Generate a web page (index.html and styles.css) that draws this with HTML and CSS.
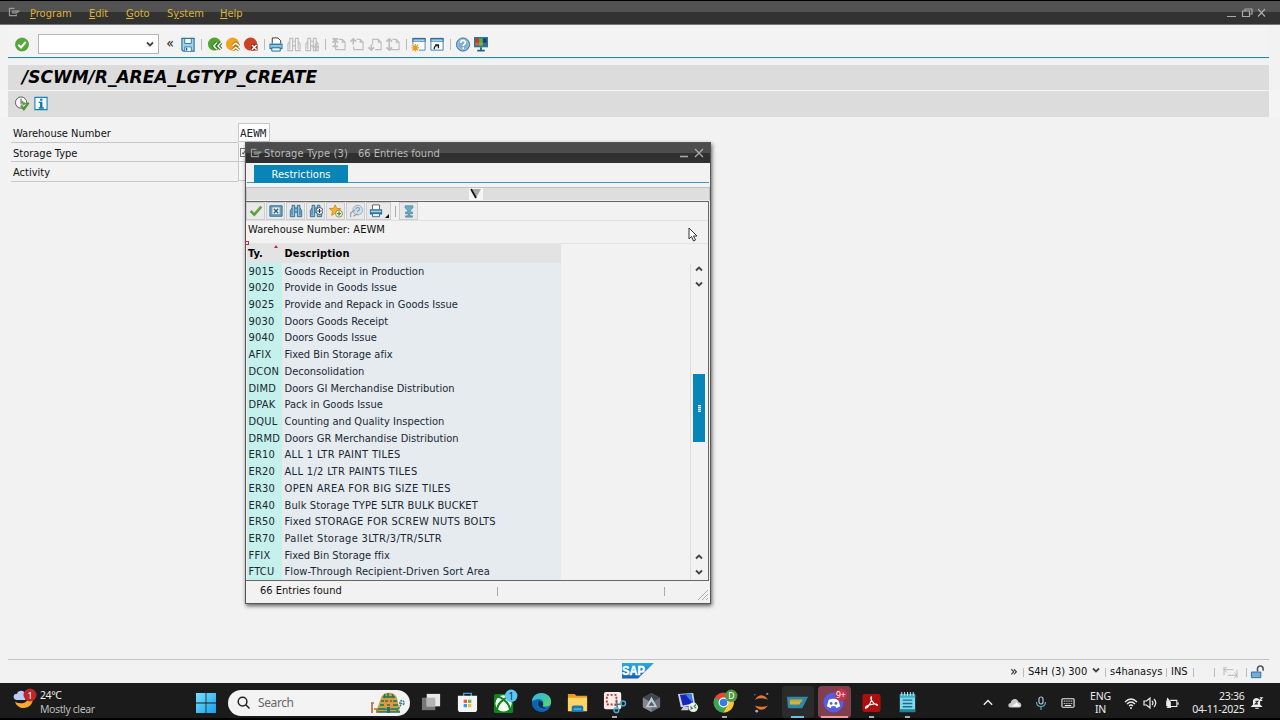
FILE: index.html
```
<!DOCTYPE html>
<html lang="en">
<head>
<meta charset="utf-8">
<title>/SCWM/R_AREA_LGTYP_CREATE</title>
<link rel="stylesheet" href="styles.css">
</head>
<body>
<svg class="sprite" aria-hidden="true">
  <symbol id="bino" viewBox="0 0 16 16"><path d="M3.500 1.500h3v3h3v-3h3v3l2 3v7h-5v-5h-3v5h-5v-7l2-3z"/><path d="M6.500 4.500v5M9.500 4.500v5M3.500 5v8M12.500 5v8"/></symbol>
  <symbol id="page" viewBox="0 0 16 16"><path d="M4.500 10v3.500h10v-8l-3-3h-4M11.500 2.500v3h3"/></symbol>
  <symbol id="menu" viewBox="0 0 14 12"><path d="M7 1.500H1.500v8H9V8M4 4.500h8.500M4 6.500h5l3-2"/></symbol>
  <symbol id="up" viewBox="0 0 8 6"><path d="M1 4.500l3-3 3 3"/></symbol>
  <symbol id="down" viewBox="0 0 8 6"><path d="M1 1.500l3 3 3-3"/></symbol>
</svg>
<div class="screen">
  <header class="menubar">
    <svg class="menu-icon" viewBox="0 0 14 12"><use href="#menu"/></svg>
    <nav class="menus">
      <span class="m-program"><u>P</u>rogram</span><span class="m-edit"><u>E</u>dit</span><span class="m-goto"><u>G</u>oto</span><span class="m-system">S<u>y</u>stem</span><span class="m-help"><u>H</u>elp</span>
    </nav>
    <svg class="win-ctl" viewBox="0 0 42 12"><path d="M1 9.500h9M16.500 4h7v5.500h-7zM19 4V2h7v5h-2.500M32 2l7 7.500M39 2l-7 7.500"/></svg>
  </header>

  <div class="toolbar">
    <svg class="ic" viewBox="0 0 16 16"><circle cx="8" cy="8" r="7" fill="#55a838" stroke="#3d8b28" stroke-width=".6"/><path d="M4 8.200l3 3 5-6" fill="none" stroke="#fff" stroke-width="2.200"/></svg>
    <div class="command"><svg class="arrow" viewBox="0 0 8 6"><use href="#down"/></svg></div>
    <span class="collapse">«</span>
    <svg class="ic" viewBox="0 0 16 16"><path d="M1.500 1.500h13V15H3l-1.500-1.500z" fill="#a9d3ec" stroke="#2a77a8" stroke-width="1.300"/><path d="M4.500 2v5h7V2M4.500 15v-4.500h7V15" fill="#f6fafc" stroke="#2a77a8"/><path d="M6.500 11.500v3" stroke="#14679b" stroke-width="1.500"/></svg>
    <i class="sep"></i>
    <svg class="ic" viewBox="0 0 16 16"><circle cx="7.500" cy="7.500" r="7" fill="#50a52f"/><path d="M10 6l-3.300 3.500 3.300 3.500M14.500 6l-3.300 3.500 3.300 3.500" class="halo green"/><path d="M10 6l-3.300 3.500 3.300 3.500M14.500 6l-3.300 3.500 3.300 3.500" class="white"/></svg>
    <svg class="ic" viewBox="0 0 16 16"><circle cx="7.500" cy="7.500" r="7" fill="#f0a51d"/><path d="M7.500 9.500l3.500-3 3.500 3M7.500 14l3.500-3 3.500 3" class="halo orange"/><path d="M7.500 9.500l3.500-3 3.500 3M7.500 14l3.500-3 3.500 3" class="white"/></svg>
    <svg class="ic" viewBox="0 0 16 16"><circle cx="7.500" cy="7.500" r="7" fill="#ca4324"/><path d="M8 7.500h7v7H8z" fill="#8d2c1d"/><path d="M9 8.500l5 5M14 8.500l-5 5" class="white"/></svg>
    <i class="sep s7"></i>
    <svg class="ic" viewBox="0 0 16 16"><path d="M4 7V1h6l3 3v3" fill="#fff" stroke="#333"/><path d="M1 7h14v6H1z" fill="#2f80ad"/><path d="M2 8.500h12v3H2z" fill="#8fc4e0"/><path d="M3.500 11.500h9V15h-9z" fill="#e8f5fb" stroke="#1b668f"/></svg>
    <svg class="ic muted" viewBox="0 0 16 16"><use href="#bino"/></svg>
    <svg class="ic muted" viewBox="0 0 16 16"><use href="#bino"/><path d="M12 7v7M8.500 10.500h7" stroke-width="2"/></svg>
    <i class="sep"></i>
    <svg class="ic muted" viewBox="0 0 16 16"><use href="#page"/><path d="M1 6l3-3 3 3M4 3v7M1 10h6M1 2h6" stroke-width="1.700"/></svg>
    <svg class="ic muted" viewBox="0 0 16 16"><use href="#page"/><path d="M1 5l3-3 3 3M4 2v6" stroke-width="1.700"/></svg>
    <svg class="ic muted" viewBox="0 0 16 16"><path d="M5.500 8V2.500h6l3 3v8H8M11.500 2.500v3h3"/><path d="M1 11l3 3 3-3M4 8v6" stroke-width="1.700"/></svg>
    <svg class="ic muted" viewBox="0 0 16 16"><use href="#page"/><path d="M1 11l3 3 3-3M4 3v10M1 5l3-3 3 3" stroke-width="1.700"/></svg>
    <i class="sep s8"></i>
    <svg class="ic" viewBox="0 0 16 16"><path d="M1.500 1.500h13v12.500h-13z" fill="#fcfdfe" stroke="#4b87b2"/><path d="M1 1h14v4H1z" fill="#306d9b"/><path d="M2 2.500h12v2H2z" fill="#a9cbe1"/><path d="M0 8h8v8H0z" fill="#f4f4f4"/><path d="M4 7.500v8M0 11.500h8M1 8.500l6 6M7 8.500l-6 6" stroke="#e59b16" stroke-width="1.300"/></svg>
    <svg class="ic" viewBox="0 0 16 16"><path d="M1.500 1.500h13v12.500h-13z" fill="#fcfdfe" stroke="#397cab"/><path d="M1 1h14v4H1z" fill="#306d9b"/><path d="M2 2.500h12v2H2z" fill="#a9cbe1"/><path d="M5 13c0-3 1-4 4-4M6 8.500h3.500V12" fill="none" stroke="#222" stroke-width="1.400"/></svg>
    <i class="sep s8"></i>
    <svg class="ic" viewBox="0 0 16 16"><circle cx="8" cy="8" r="7" fill="#80acd0" stroke="#396f9d"/><circle cx="8" cy="8" r="5.500" fill="none" stroke="#b9d2e6" stroke-width=".7"/><path d="M5.500 6.500C5.500 3 10.500 3 10.500 6c0 1.800-2.300 1.800-2.300 3.700M8.200 11v1.800" fill="none" stroke="#fff" stroke-width="1.700"/></svg>
    <svg class="ic" viewBox="0 0 16 16"><path d="M.5 0h15v11H.5z" fill="#277a9e"/><path d="M2 1.500h4V9H2z" fill="#d73521"/><path d="M6 1.500h4V9H6z" fill="#4db23c"/><path d="M10 1.500h4V9h-4z" fill="#193b91"/><path d="M2 6h12v3H2z" fill="#eed44d" opacity=".28"/><path d="M8 11v3M4 14.500h8" stroke="#246584" stroke-width="2"/></svg>
  </div>

  <h1 class="title">/SCWM/R_AREA_LGTYP_CREATE</h1>
  <div class="appbar">
    <svg class="ic" viewBox="0 0 16 16"><circle cx="7" cy="7" r="6" fill="#fafafa" stroke="#555"/><path d="M7 3v6" fill="none" stroke="#444"/><path d="M7 10l3 4 5-7" fill="none" stroke="#52933b" stroke-width="2.500"/><path d="M7 4.500l6 3.500-4 2.500z" fill="#62a24b"/></svg>
    <svg class="ic" viewBox="0 0 16 16"><path d="M1.500 1.500h13v13h-13z" fill="#f4fbfe" stroke="#1685b5" stroke-width="1.200"/><path d="M7 3h2.500v2H7zM5.500 6h4v6H11v1.500H5.500V12H7V7.500H5.500z" fill="#087caf"/></svg>
  </div>

  <main class="form">
    <div class="field"><label>Warehouse Number</label><span class="value filled">AEWM</span></div>
    <div class="field"><label>Storage Type</label><span class="value"><i class="check">✓</i></span></div>
    <div class="field"><label>Activity</label><span class="value"></span></div>
  </main>

  <footer class="statusbar">
    <svg class="sap" viewBox="0 0 32 16"><defs><linearGradient id="sg" x2="0" y2="1"><stop stop-color="#24aee2"/><stop offset="1" stop-color="#1560ae"/></linearGradient></defs><path d="M0 0h32L16 15.500H0z" fill="url(#sg)"/><text x="0" y="12" textLength="23" lengthAdjust="spacingAndGlyphs">SAP</text></svg>
    <div class="status-items">
      <span class="more">»</span><i></i><span class="sys">S4H (3) 300</span><svg class="arrow" viewBox="0 0 8 6"><use href="#down"/></svg><i></i><span class="host">s4hanasys</span><i></i><span class="ins">INS</span><i class="after"></i><i class="far"></i>
      <svg class="swap" viewBox="0 0 16 14"><path d="M1 1v9M1 4h10M4 1L1 4l3 3M15 4v9M15 10H5M12 7l3 3-3 3"/></svg><i class="before-lock"></i>
      <svg class="lock" viewBox="0 0 16 16"><path d="M8 7V4c0-4 6-4 6 0v2" fill="none" stroke="#555" stroke-width="1.700"/><path d="M1.500 7.500h10v6h-10z" fill="#76add3" stroke="#276b9d"/></svg>
    </div>
  </footer>

  <div class="taskbar">
    <div class="weather">
      <svg viewBox="0 0 24 26"><path d="M20 10c1 12-14 15-18 5 7 3 13 1 14-6z" fill="#f6a92e"/><path d="M3 13c-5-3-1-7 1-6 1-5 9-4 8 1 3 2 1 5-1 5z" fill="#bccdf5"/><circle cx="17" cy="8" r="6.500" fill="#bf272b"/><text x="14.500" y="11.500">1</text></svg>
      <p><b>24°C</b><span>Mostly clear</span></p>
    </div>
    <svg class="start" viewBox="0 0 20 20"><defs><linearGradient id="wg" x2="1" y2="1"><stop stop-color="#74e2fb"/><stop offset="1" stop-color="#1a9df0"/></linearGradient></defs><path d="M0 0h9.600v9.600H0zM10.400 0H20v9.600h-9.600zM0 10.400h9.600V20H0zM10.400 10.400H20V20h-9.600z" fill="url(#wg)"/></svg>
    <div class="search">
      <svg class="lens" viewBox="0 0 14 14"><circle cx="6" cy="6" r="4.700"/><path d="M9.500 9.500l4 4"/></svg><span>Search</span>
      <svg class="pharaoh" viewBox="0 0 36 22"><path d="M6 20l5-14c2-7 14-7 16 0l3 14z" fill="#c9a33b"/><path d="M8 17h20M10 13h18M11 9h16M13 5h12M18 1v4M15 2l-1 4M22 2l2 4M8 20h22" stroke="#1e7167" stroke-width="1.500"/><path d="M14 7h9v7c-1 4-8 4-9 0z" fill="#d89c48"/><path d="M15 9h3M20 9h2M17 13h3" stroke="#453727"/><path d="M17 15h3v6h-3z" fill="#206d77"/><path d="M2 21V11M1 11h3M4 17h3v4" fill="none" stroke="#ad7542" stroke-width="1.700"/><path d="M27 19l5-8M30 12c-1-6 7-3 3 1" fill="none" stroke="#347c91" stroke-width="1.500" stroke-dasharray="2 .7"/></svg>
    </div>
    <div class="apps">
      <span><svg viewBox="0 0 24 24"><path d="M2 7h14v13H2z" fill="#777"/><path d="M7 3h14v13H7z" fill="#e8e8e8"/><path d="M7 7h9v9H7z" fill="#b5b5b5"/></svg></span>
      <span><svg viewBox="0 0 24 24"><path d="M8 7V2.500h8V7" fill="none" stroke="#39a3d5" stroke-width="1.500"/><path d="M2 5h20v14q0 3-3 3H5q-3 0-3-3z" fill="#f3f5f7"/><path d="M8 9h3.500v3.500H8z" fill="#ed5a35"/><path d="M12.500 9H16v3.500h-3.500z" fill="#7cb642"/><path d="M8 13.500h3.500V17H8z" fill="#2ca5df"/><path d="M12.500 13.500H16V17h-3.500z" fill="#f6bc31"/></svg></span>
      <span><svg viewBox="0 0 24 24"><rect x="1" y="3" width="20" height="20" rx="2" fill="#10841d"/><circle cx="11" cy="13" r="8.500" fill="#f6fff5"/><path d="M4 20c1-6 4-9 7-11 3 2 6 5 7 11M5 6c3 0 5 2 6 3 1-1 3-3 6-3" fill="none" stroke="#10841d" stroke-width="2.200"/><circle cx="19" cy="5" r="6.500" fill="#5bc7f2"/><text x="16" y="9" class="dark">1</text></svg></span>
      <span><svg viewBox="0 0 24 24"><defs><linearGradient id="eg" x2="1" y2="1"><stop stop-color="#29b7ed"/><stop offset=".55" stop-color="#45c5a1"/><stop offset="1" stop-color="#5adb67"/></linearGradient></defs><circle cx="12" cy="12" r="10" fill="#156dbb"/><path d="M2 11C3-2 23 0 22 12c0 5-8 5-9 3 4-7-6-9-11-4z" fill="url(#eg)"/><path d="M9 10c-5 5 1 13 10 9-7 6-17 1-17-7 2-2 5-3 7-2z" fill="#0b62b0"/><path d="M10 10c-4 4 0 10 8 8-5 0-6-3-4-4-1-2-2-3-4-4z" fill="#122d50"/></svg></span>
      <span><svg viewBox="0 0 24 24"><path d="M2 3h7l2 2h11v16H2z" fill="#e79c1e"/><path d="M2 7h20v14H2z" fill="#ffd466"/><path d="M6 17q0-2 2-2h8q2 0 2 2v5H6z" fill="#1978b6"/><path d="M8 18h8v2H8z" fill="#54a9d8"/></svg></span>
      <span class="open"><svg viewBox="0 0 24 24"><rect x="1" y="1" width="18" height="18" rx="2" fill="#f5eeec"/><path d="M4 4h10v10H4z" fill="none" stroke="#bb372e" stroke-width="2" stroke-dasharray="2 2"/><path d="M14 9l1 9M12 15l8-2" stroke="#5a6771" stroke-width="1.500"/><circle cx="14" cy="20" r="2.500" class="blue-ring"/><circle cx="21" cy="13" r="2.500" class="blue-ring"/></svg></span>
      <span><svg viewBox="0 0 24 24"><path d="M12 2l9 5v10l-9 5-9-5V7z" fill="#666c74"/><path d="M12 2l9 5-9 5-9-5z" fill="#424850"/><path d="M3 7l9 5v10l-9-5z" fill="#858a90"/><path d="M12 6l-6 11h12z" fill="#c4cbd0"/><path d="M12 11l-3 4.500h6z" fill="#535960"/></svg></span>
      <span><svg viewBox="0 0 24 24"><path d="M2 3l16-1 2 13-15 2z" fill="#cdd5e5"/><path d="M4 4l12-1 2 10-11 2z" fill="#1526bd"/><path d="M10 4l7 8-1-9z" fill="#3985e3"/><path d="M8 16l5 1v3H5z" fill="#ccd"/><circle cx="18" cy="17" r="5" fill="#edf0ed"/><path d="M15 16l2 2-2 1M21 14l-2 2 2 2" fill="none" stroke="#358b38" stroke-width="1.300"/></svg></span>
      <span class="open"><svg viewBox="0 0 24 24"><circle cx="11" cy="12" r="10.500" fill="#ea4335"/><path d="M11 12L2 7A10.500 10.500 0 0011 22.500l5-7z" fill="#34a853"/><path d="M11 7h9.500A10.500 10.500 0 0111 22.500l5-9z" fill="#fbc62e"/><circle cx="11" cy="12" r="5.200" fill="#fff"/><circle cx="11" cy="12" r="4" fill="#347de9"/><circle cx="19" cy="5" r="6.500" fill="#529840"/><text x="15.800" y="8.300">D</text></svg></span>
      <span><svg viewBox="0 0 24 24"><path d="M5 9Q12 0 19 9Q12 6 5 9zM5 15Q12 18 19 15Q12 24 5 15z" fill="#eb772e"/><circle cx="18" cy="3" r="1.200" fill="#888"/><circle cx="7" cy="21" r="1.500" fill="#aaa"/><circle cx="5" cy="4" r=".8" fill="#777"/></svg></span>
      <span class="active"><svg viewBox="0 0 24 24"><path d="M1 6h22l-6 12H2z" fill="#2f86a5"/><path d="M4 9h13l-3 5H4z" fill="#d6b536"/><path d="M4 9h13v2H4z" fill="#b3ab4a"/></svg></span>
      <span class="active alert"><svg viewBox="0 0 24 24"><circle cx="11" cy="12" r="10.500" fill="#555de5"/><path d="M6 9q5-2 10 0l2 7-4 2-1-2H9l-1 2-4-2z" fill="#fff"/><circle cx="8.500" cy="13" r="1.400" fill="#555de5"/><circle cx="13.500" cy="13" r="1.400" fill="#555de5"/><circle cx="19" cy="4" r="6.500" fill="#c6334a"/><text x="13.500" y="7.500" class="nine">9+</text></svg></span>
      <span class="open"><svg viewBox="0 0 24 24"><rect x="2.500" y="3" width="19" height="19" rx="2.500" fill="#ac100e"/><path d="M12 6c-2 0 0 7 6 9 1-1-3-2-6-1-5 1-7 3-6 4 2 0 7-7 6-12z" fill="none" stroke="#fff" stroke-width="1.200"/></svg></span>
      <span class="open"><svg viewBox="0 0 24 24"><path d="M4 4h16v18H4z" fill="#7bd9ed"/><path d="M4 19h16v3H4z" fill="#20839b"/><path d="M4 3h16v4H4z" fill="#3aafc9"/><path d="M6 1v4M9 1v4M12 1v4M15 1v4M18 1v4" stroke="#d1e9ef"/><path d="M7 9.500h10M7 13h10M7 16.500h10" stroke="#206b84" stroke-width="1.500"/></svg></span>
    </div>
    <div class="tray">
      <span class="t-up"><svg viewBox="0 0 12 12"><path d="M1 8l5-5 5 5" stroke-width="1.700"/></svg></span>
      <span class="t-cloud"><svg viewBox="0 0 16 12"><path d="M3 11c-4 0-3-5 0-5C4 0 11 0 12 5c4 0 4 6 1 6z" fill="#c9c9c9" stroke="none"/><path d="M4 10l6-5 4 5z" fill="#f6f6f6" stroke="none"/></svg></span>
      <span class="t-mic"><svg viewBox="0 0 12 14"><rect x="4" y="1" width="4" height="7" rx="2" stroke="#b0cbd1"/><path d="M1.500 6c0 6 9 6 9 0M6 11v3" stroke="#58afc0"/></svg></span>
      <span class="t-key"><svg viewBox="0 0 15 12"><rect x="1" y="1.500" width="13" height="9" rx="1"/><path d="M3 4h9M3 6.500h9" stroke-dasharray="1 1"/><path d="M4 8.700h7"/></svg></span>
      <span class="lang">ENG<br>IN</span>
      <span class="t-wifi"><svg viewBox="0 0 14 14"><path d="M1 6q6-6 12 0M3 8q4-4 8 0M5 10q2-2 4 0"/><circle cx="7" cy="12" r="1" fill="#eee" stroke="none"/></svg></span>
      <span class="t-sound"><svg viewBox="0 0 14 14"><path d="M1 5h2.500L7 2v10L3.500 9H1zM9 5q2 2 0 4M11 3q3.500 4 0 8"/></svg></span>
      <span class="t-bat"><svg viewBox="0 0 16 14"><path d="M6 4h7.500v7H3M15 6v3"/><path d="M3 2l3 4v4H2V6z" fill="#eee"/><path d="M2 12h5"/></svg></span>
      <span class="clock">23:36<br>04-11-2025</span>
      <span class="t-bell"><svg viewBox="0 0 16 16"><path d="M2 12l2-2V5q3-4 7 0v5l2 2zM6 14h4" fill="#eee"/><path d="M11 2h3l-3 3h3" /><path d="M6 6h3L6 9h3" stroke="#222"/></svg></span>
    </div>
  </div>

  <section class="dialog">
    <div class="dlg-title"><svg class="menu-icon" viewBox="0 0 14 12"><use href="#menu"/></svg><span class="dt-name">Storage Type (3)</span><span class="dt-count">66 Entries found</span>
      <svg class="dlg-ctl" viewBox="0 0 26 12"><path d="M1 9.500h8M16 2l8 8M24 2l-8 8"/></svg></div>
    <div class="tabs"><span>Restrictions</span></div>
    <div class="splitter"><svg viewBox="0 0 14 12"><path d="M0 0h14v12H0z" fill="#f6f6f6"/><path d="M2 1h10L7 10z" fill="#aaa"/><path d="M2 1l5 9" stroke="#111" stroke-width="1.700"/></svg></div>
    <div class="dlg-body">
      <div class="dlg-tools">
        <span><svg viewBox="0 0 16 16"><path d="M2 8l4 4 8-9" fill="none" stroke="#5a9a3a" stroke-width="3"/><path d="M3 8l3 2.500 7-7" fill="none" stroke="#8bc452"/></svg></span>
        <span><svg viewBox="0 0 16 16"><path d="M1 2h14v12H1z" fill="#6aa1c3" stroke="#286b91"/><path d="M4 4h8v7.500H4z" fill="#f1f9fd"/><path d="M5.500 5.500l5 5M10.500 5.500l-5 5" stroke="#37536a" stroke-width="1.500"/></svg></span>
        <span class="binoc"><svg viewBox="0 0 16 16"><use href="#bino"/></svg></span>
        <span class="binoc"><svg viewBox="0 0 16 16"><use href="#bino"/><circle cx="12" cy="8" r="4" fill="#eef6fb" stroke="#37536a"/><path d="M12 5.500v5M9.500 8h5" stroke="#222"/></svg></span>
        <span><svg viewBox="0 0 16 16"><path d="M7 1l1.800 4 4.700.3-3.500 3 1 4.700L7 10.500 3 13l1-4.700L.5 5.300 5.200 5z" fill="#f7b52d" stroke="#d38914"/><circle cx="11.500" cy="11" r="4" fill="#f8faf2" stroke="#778651"/><path d="M11.500 8.500v5M9 11h5" stroke="#638436" stroke-width="1.500"/></svg></span>
        <span><svg viewBox="0 0 16 16"><circle cx="10" cy="7" r="5.500" fill="#d2e1ec" stroke="#91a8b8"/><path d="M8 6q0-2 2-2t2 2q0 1-2 2v1.500M2 15v-5l5-3M5 14l5-3" fill="none" stroke="#8297a6" stroke-width="1.200"/></svg></span>
        <span class="print"><svg viewBox="0 0 16 16"><path d="M4 6V1h8v5" fill="#fff" stroke="#555"/><path d="M1 6h14v6H1z" fill="#256f99"/><path d="M2 7.500h12v2H2z" fill="#a5cfe4"/><path d="M4 11h8v3.500H4z" fill="#eef9fc" stroke="#216a8f"/></svg><b></b></span>
        <i></i>
        <span><svg viewBox="0 0 16 16"><path d="M3.500 2h9v2.500L9.500 7v2H12v2H9v2.500h3V15H4v-1.500h3V11H4V9h2.500V7l-3-2.500z" fill="#6babc9" stroke="#34718e" stroke-width=".6"/></svg></span>
      </div>
      <p class="caption"><span>Warehouse Number: AEWM</span></p>
      <div class="result">
        <div class="grid">
          <div class="head"><span>Ty.<i></i></span><span><b>Description</b></span></div>
          <div class="row"><span>9015</span><span><b>Goods Receipt in Production</b></span></div>
          <div class="row"><span>9020</span><span><b>Provide in Goods Issue</b></span></div>
          <div class="row"><span>9025</span><span><b>Provide and Repack in Goods Issue</b></span></div>
          <div class="row"><span>9030</span><span><b>Doors Goods Receipt</b></span></div>
          <div class="row"><span>9040</span><span><b>Doors Goods Issue</b></span></div>
          <div class="row"><span>AFIX</span><span><b>Fixed Bin Storage afix</b></span></div>
          <div class="row"><span>DCON</span><span><b>Deconsolidation</b></span></div>
          <div class="row"><span>DIMD</span><span><b>Doors GI Merchandise Distribution</b></span></div>
          <div class="row"><span>DPAK</span><span><b>Pack in Goods Issue</b></span></div>
          <div class="row"><span>DQUL</span><span><b>Counting and Quality Inspection</b></span></div>
          <div class="row"><span>DRMD</span><span><b>Doors GR Merchandise Distribution</b></span></div>
          <div class="row caps"><span>ER10</span><span><b>ALL 1 LTR PAINT TILES</b></span></div>
          <div class="row caps"><span>ER20</span><span><b>ALL 1/2 LTR PAINTS TILES</b></span></div>
          <div class="row caps"><span>ER30</span><span><b>OPEN AREA FOR BIG SIZE TILES</b></span></div>
          <div class="row mixed"><span>ER40</span><span><b>Bulk Storage TYPE 5LTR BULK BUCKET</b></span></div>
          <div class="row semi"><span>ER50</span><span><b>Fixed STORAGE FOR SCREW NUTS BOLTS</b></span></div>
          <div class="row caps"><span>ER70</span><span><b>Pallet Storage 3LTR/3/TR/5LTR</b></span></div>
          <div class="row"><span>FFIX</span><span><b>Fixed Bin Storage ffix</b></span></div>
          <div class="row mixed"><span>FTCU</span><span><b>Flow-Through Recipient-Driven Sort Area</b></span></div>
        </div>
        <div class="scroll">
          <svg class="arrow" viewBox="0 0 8 6"><use href="#up"/></svg><svg class="arrow" viewBox="0 0 8 6"><use href="#down"/></svg>
          <div class="thumb"><i></i></div>
          <svg class="arrow low" viewBox="0 0 8 6"><use href="#up"/></svg><svg class="arrow" viewBox="0 0 8 6"><use href="#down"/></svg>
        </div>
      </div>
    </div>
    <div class="dlg-status"><span>66 Entries found</span><i class="d1"></i><i class="d2"></i><svg viewBox="0 0 12 12"><path d="M1 11L11 1M5 11l6-6M9 11l2-2"/></svg></div>
    <i class="focus"></i>
  </section>
  <svg class="cursor" viewBox="0 0 10 15"><path d="M1 1v11l2.500-2.500L5.500 14l2-1-2-4H9z" fill="#fff" stroke="#333"/></svg>
</div>
</body>
</html>
```
FILE: styles.css
```
* { box-sizing: border-box; }
body { margin: 0; background: #000; }
svg { display: block; flex: none; }
.sprite { position: absolute; width: 0; height: 0; }
.screen {
  position: relative; width: 1280px; height: 720px; padding: 1px 0 2px; overflow: hidden;
  display: flex; flex-direction: column; background: #000;
  font: 11px/16px "DejaVu Sans Condensed", "Noto Sans", sans-serif; color: #111;
}
.menubar {
  height: 24px; flex: none; display: flex; align-items: center; padding: 0 12px 0 8px;
  background: linear-gradient(#525252 0 11px, #323232 11px 23px, #777 23px);
}
.menu-icon { width: 13px; height: 11px; fill: none; stroke: #999; stroke-width: 1.300; }
.menubar .menu-icon { margin-top: -2px; }
.menus { display: flex; flex: 1; margin-left: 9px; color: #dfb238; line-height: 22px; padding-top: 2px; }
.menus span { white-space: nowrap; }
.m-program { width: 59px; }
.m-edit { width: 37px; }
.m-goto { width: 41px; }
.m-system { width: 53px; }
.win-ctl { width: 42px; height: 12px; fill: none; stroke: #aaa; stroke-width: 1.200; }

.toolbar { height: 40px; flex: none; display: flex; align-items: center; padding: 0 0 2px 13px; background: linear-gradient(#f3f3f3 0 32px, #28899e 32px 33px, #d8f0f4 33px 34px, #f2f2f2 34px) 8px 0 / 1261px 40px no-repeat #f2f2f2; }
.ic { width: 18px; height: 15px; }
.muted { fill: none; stroke: #bdbdbd; stroke-width: 1.200; }
.white { fill: none; stroke: #fff; stroke-width: 1.500; }
.halo { fill: none; stroke-width: 3.500; }
.green { stroke: #34761f; }
.orange { stroke: #ad711c; }
.command { width: 121px; height: 20px; margin: 0 0 0 7px; border: 1px solid #b5b5b5; background: #fff; display: flex; justify-content: flex-end; align-items: center; padding-right: 4px; }
.arrow { width: 8px; height: 6px; fill: none; stroke: #444; stroke-width: 1.800; }
.collapse { width: 20px; text-align: center; font-size: 14px; line-height: 14px; padding-left: 2px; margin-bottom: 2px; }
.sep { width: 9px; height: 11px; background: linear-gradient(#bbb, #bbb) 4px 0 / 1px 11px no-repeat; }
.s7 { width: 7px; }
.s8 { width: 8px; }

.title { height: 25px; flex: none; margin: 0; border-left: 8px solid #f2f2f2; border-right: 11px solid #f2f2f2; padding-left: 14px; background: #dcdcdc; color: #000; font: italic bold 17px/25px "DejaVu Sans", sans-serif; white-space: nowrap; }
.appbar { height: 27px; flex: none; border: solid #f4f4f4; border-width: 1px 11px 0 8px; background: #dcdcdc; display: flex; align-items: center; gap: 1px; padding: 0 0 2px 5px; }
.form { flex: 1; background: #f2f2f2; padding: 6px 0 0 11px; }
.field { display: flex; height: 19.600px; width: 227px; border-bottom: 1px solid #c7c7c7; }
.field label { width: 227px; padding-left: 2px; line-height: 22px; flex: none; }
.value { width: 32px; flex: none; border: 1px solid #c8c8c8; border-top: 0; background: #f8f8f8; height: 19px; }
.filled { border-top: 1px solid #c8c8c8; background: #fff; font: 11px/19px "DejaVu Sans Mono", monospace; padding-left: 1px; color: #223; }
.check { display: block; width: 9px; height: 9px; margin: 5px 0 0 1px; border: 1px solid #777; font: 8px/8px "DejaVu Sans", sans-serif; }

.statusbar { height: 24px; flex: none; display: flex; background: #f2f2f2; background-image: linear-gradient(#c4c4c4, #c4c4c4); background-size: 1261px 1px; background-position: 8px 0; background-repeat: no-repeat; }
.sap { width: 32px; height: 16px; margin: 4px 0 0 622px; }
.sap text { font: bold 12px "Liberation Sans", sans-serif; fill: #fff; stroke: #fff; stroke-width: .5; }
.status-items { display: flex; align-items: center; margin-left: 356px; padding-top: 2px; white-space: nowrap; }
.status-items i { width: 1px; height: 9px; background: #bbb; }
.more { width: 13px; font-size: 14px; line-height: 14px; margin-bottom: 3px; }
.sys { width: 65px; padding-left: 4px; }
.status-items .arrow { margin: 0 5px 4px 3px; }
.host { width: 60px; padding-left: 4px; letter-spacing: 0; }
.ins { width: 26px; padding-left: 4px; }
.status-items .far { margin-left: 20px; }
.swap { width: 15px; height: 13px; margin-left: 8px; fill: none; stroke: #b5b5b5; }
.status-items .before-lock { margin-left: 8px; }
.lock { width: 15px; height: 15px; margin-left: 3px; }

.taskbar { height: 35px; flex: none; display: flex; align-items: center; background: #1b1b1b; color: #eee; font: 11px/13px "Noto Sans", sans-serif; }
.weather { width: 196px; display: flex; padding-left: 13px; align-items: center; }
.weather svg { width: 24px; height: 26px; margin-bottom: 2px; }
.weather p { margin: 3px 0 0 3px; display: flex; flex-direction: column; gap: 1px; font-size: 10.500px; letter-spacing: -.4px; }
.weather b { font-weight: normal; }
.weather span { color: #bbb; }
.weather text, .apps text { font: 9px "Noto Sans", sans-serif; fill: #fff; }
.start { width: 20px; height: 20px; margin-top: 4px; }
.search { width: 182px; height: 26px; margin: 4px 0 0 12px; border-radius: 13px; background: #f3f3f3; display: flex; align-items: center; padding-left: 9px; color: #666; font-size: 12px; letter-spacing: -.4px; }
.lens { width: 13px; height: 13px; fill: none; stroke: #222; stroke-width: 1.600; }
.search span { margin-left: 8px; width: 112px; }
.pharaoh { width: 36px; height: 22px; }
.apps { display: flex; margin-left: 2.700px; height: 35px; width: 513.800px; }
.apps span { width: 36.700px; flex: none; display: flex; align-items: center; justify-content: center; padding-top: 4px; }
.apps svg { width: 23px; height: 23px; overflow: visible; }
.apps .dark { fill: #14384d; font-size: 11px; }
.apps .nine { font-size: 9px; }
.blue-ring { fill: none; stroke: #4cacd9; stroke-width: 1.500; }
.apps .open { background: linear-gradient(#aaa, #aaa) center 33px / 5px 2px no-repeat; }
.apps .active { width: 32.700px; margin: 3px 2px 0; padding-top: 1px; border-radius: 4px; background: linear-gradient(#62c4e6, #62c4e6) center 30px / 13px 2px no-repeat, #2b2b2b; }
.apps .alert { background: linear-gradient(#ef9aac, #ef9aac) center 30px / 27px 2px no-repeat, #813e4c; }
.tray { display: flex; align-items: center; margin-left: 49px; padding-top: 4px; }
.tray span { display: flex; justify-content: center; text-align: center; flex: none; }
.tray svg { width: 14px; height: 14px; fill: none; stroke: #eee; stroke-width: 1.200; }
.t-up { width: 25px; }
.t-up svg { width: 10px; }
.t-cloud { width: 29px; }
.t-mic { width: 24px; }
.t-key { width: 29px; }
.tray .lang { display: block; width: 36px; font-size: 10.500px; letter-spacing: -.2px; }
.t-wifi { width: 26px; }
.t-sound { width: 12px; }
.t-bat { width: 27px; padding-left: 4px; }
.tray .clock { display: block; width: 61px; text-align: right; font-size: 10.500px; letter-spacing: -.25px; white-space: nowrap; }
.t-bell { width: 26px; }

.dialog { position: absolute; left: 245px; top: 142px; width: 466px; height: 462px; background: #f2f2f2; border: 1px solid #555; box-shadow: 1px 2px 4px rgba(0, 0, 0, .6); display: flex; flex-direction: column; }
.dlg-title { height: 20px; flex: none; display: flex; align-items: center; padding: 0 5px 0 4px; background: linear-gradient(#4d4d4d 0 10px, #303030 10px); color: #bbb; white-space: nowrap; }
.dt-name { width: 94px; margin-left: 1px; letter-spacing: .15px; }
.dt-name, .dt-count { padding-top: 1px; }
.dt-count { flex: 1; }
.dlg-ctl { width: 26px; height: 12px; fill: none; stroke: #aaa; stroke-width: 1.300; }
.tabs { height: 24px; flex: none; padding: 2px 1px 0 8px; background: linear-gradient(#3a9bb0, #3a9bb0) 1px 19px / 462px 1px no-repeat; }
.tabs span { display: block; width: 94px; height: 18px; text-align: center; background: #0884b7; color: #fff; line-height: 19px; letter-spacing: .1px; }
.splitter { height: 14px; flex: none; border: 1px solid #c2c2c2; background: #dedede; border-bottom-color: #eee; padding-left: 222px; }
.splitter svg { width: 14px; height: 12px; }
.dlg-body { height: 380px; flex: none; margin-right: 1px; border: solid #666; border-width: 1px 1px 1px 0; padding-left: 1px; }
.dlg-tools { height: 19px; display: flex; gap: 1px; border-bottom: 1px solid #e0e0e0; margin-left: -1px; }
.dlg-tools span { width: 19px; height: 18px; border: 1px solid #ccc; background: #e9e9e9; display: flex; align-items: center; justify-content: center; }
.dlg-tools svg { width: 14px; height: 14px; }
.binoc svg { fill: #94c3df; stroke: #286486; }
.dlg-tools .print { width: 25px; }
.dlg-tools .print b { border-left: 4px solid transparent; border-bottom: 4px solid #111; align-self: flex-end; margin: 0 0 1px 2px; }
.dlg-tools i { width: 6px; background: linear-gradient(#aaa, #aaa) 3px 4px / 1px 11px no-repeat; }
.caption { margin: 0; height: 23px; padding-left: 1px; line-height: 17px; border-bottom: 1px solid #e4e4e4; letter-spacing: .07px; }
.result { display: flex; height: 336px; }
.grid { width: 314px; flex: none; }
.head, .row { display: flex; }
.head { height: 18.500px; font-weight: bold; line-height: 19px; background: #e3e3e3; color: #000; }
.head span:first-child { width: 35px; padding-left: 1px; flex: none; display: flex; }
.head i { border: 2px solid transparent; border-top: 0; border-bottom: 3px solid #c12638; width: 4px; height: 0; margin-left: 11px; margin-top: 1px; }
.head b { letter-spacing: .1px; }
.row { height: 16.720px; line-height: 18.700px; color: #182830; white-space: nowrap; letter-spacing: .02px; }
.row span:first-child { width: 35px; padding-left: 1.500px; flex: none; background: #c6f0ec; letter-spacing: .2px; }
.row span + span { flex: 1; padding-left: 2.500px; background: #e6ebf0; }
.row b { font-weight: normal; }
.caps { letter-spacing: .34px; }
.mixed { letter-spacing: .12px; }
.semi { letter-spacing: .26px; }
.head span + span { padding-left: 2.500px; }
.scroll { width: 17px; margin: 20px 0 0 129px; border-left: 1px solid #ddd; display: flex; flex-direction: column; align-items: center; padding-top: 2px; }
.scroll .arrow + .arrow { margin-top: 9px; }
.thumb { width: 12px; height: 68px; margin-top: 87px; background: #0884b7; display: flex; align-items: center; justify-content: center; }
.thumb i { width: 3px; height: 7px; background: repeating-linear-gradient(#e3f7ff 0 1px, #63b3d3 1px 2px); }
.scroll .low { margin-top: 112px; }
.dlg-status { flex: 1; display: flex; align-items: center; padding: 0 1px 2px 14px; }
.dlg-status span { width: 237px; }
.dlg-status i { width: 1px; height: 9px; background: #aaa; }
.d2 { margin-left: 166px; }
.dlg-status svg { width: 12px; height: 12px; margin: 8px 0 0 32px; stroke: #aaa; fill: none; }
.focus { position: absolute; left: -1px; top: 98px; width: 4px; height: 4px; border: 1px solid #b42b50; }
.cursor { position: absolute; left: 688px; top: 227px; width: 10px; height: 15px; }
```
